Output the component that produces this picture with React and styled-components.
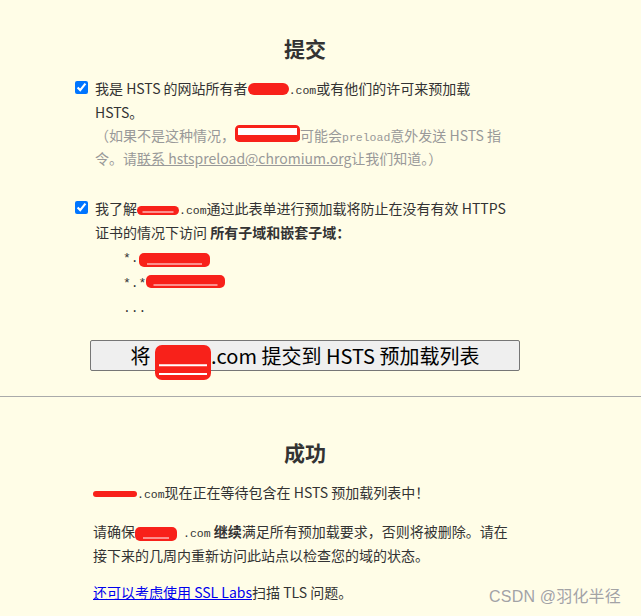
import React from 'react';
import styled, { createGlobalStyle } from 'styled-components';

const RED = '#f8211a';

const Global = createGlobalStyle`
  html, body { margin: 0; padding: 0; background: #fffde7; }
  body {
    font-family: "Noto Sans CJK SC", "Noto Sans", sans-serif;
    color: #333;
    font-size: 14px;
  }
`;

const Page = styled.div`
  position: relative;
  width: 641px;
  height: 616px;
  overflow: hidden;
  padding-top: 33px;
  box-sizing: border-box;
`;

const Section = styled.section`
  width: 460px;
  margin-left: 75px;
  margin-top: ${p => p.$top || 0}px;
`;

const Title = styled.h2`
  margin: 0;
  text-align: center;
  font-size: 21px;
  line-height: 30px;
  font-weight: 700;
  color: #333;
`;

const Form = styled.form`
  margin-top: 13px;
  display: flex;
  flex-direction: column;
`;

const CheckRow = styled.label`
  display: flex;
  gap: 7px;
  line-height: 24px;
  margin-top: ${p => p.$top || 0}px;
`;

const Check = styled.input`
  flex: none;
  width: 13px;
  height: 13px;
  margin: 5px 0 0 0;
`;

const LabelText = styled.div`
  width: 423px;
`;

const Note = styled.span`
  display: block;
  color: #999;
  line-height: 23px;
`;

const NoteLink = styled.a`
  color: #999;
  text-decoration: underline;
`;

const Code = styled.code`
  font-family: "Liberation Mono", monospace;
  font-size: 11.5px;
  line-height: 1;
`;

const Strong = styled.strong`
  font-weight: 700;
`;

const DomainList = styled.ul`
  list-style: none;
  margin: 0;
  padding: 0 0 0 48px;
  line-height: 25px;
`;

const Domain = styled.li`
  code {
    font-family: "Liberation Mono", monospace;
    font-size: 13px;
    line-height: 1;
  }
`;

const Submit = styled.button`
  display: block;
  margin: 21px auto 0;
  width: 430px;
  height: 31px;
  padding: 0;
  background: #efefef;
  border: 1px solid #767676;
  border-radius: 2px;
  font-family: "Noto Sans CJK SC", "Noto Sans", sans-serif;
  font-size: 20px;
  line-height: 29px;
  color: #000;
`;

const Divider = styled.hr`
  margin: 25px 0 0;
  border: none;
  border-top: 1px solid #aaa;
  height: 0;
`;

const Para = styled.p`
  margin: ${p => p.$top || 0}px 0 0 18px;
  width: 426px;
  line-height: 24px;
`;

const Link = styled.a`
  color: #0000ee;
  text-decoration: underline;
`;

/* zero-height inline holder so the scribble never changes the line box */
const ScribbleBox = styled.span`
  display: inline-block;
  width: ${p => p.$w}px;
  height: 0;
  vertical-align: baseline;
  margin-right: ${p => p.$mr || 0}px;
  line-height: 0;
  svg {
    display: block;
    overflow: visible;
    transform: translateY(${p => p.$top}px);
  }
`;

const Watermark = styled.div`
  position: absolute;
  left: 489px;
  top: 586px;
  font-family: "Liberation Sans", "Noto Sans CJK SC", sans-serif;
  font-size: 16px;
  line-height: 22px;
  color: #a3a3a3;
  text-shadow: 0 0 1px #fff;
  letter-spacing: 0.2px;
`;

function Scribble({ w, h, kind = 'fill', top, mr }) {
  let shapes;
  if (kind === 'fill') {
    shapes = <rect x="0" y="0" width={w} height={h} rx={h / 2} fill={RED} />;
  } else if (kind === 'line') {
    shapes = (
      <>
        <rect x="0" y="0" width={w} height={h} rx={Math.min(h / 2, 5)} fill={RED} />
        <line x1={h / 2 + 1} x2={w - h / 2 - 1} y1={h - 3} y2={h - 3} stroke="#fff" strokeWidth="1" />
      </>
    );
  } else if (kind === 'box') {
    shapes = (
      <>
        <rect x="1.5" y="1.5" width={w - 3} height={h - 3} rx="3" fill="none" stroke={RED} strokeWidth="3" />
        <rect x="3" y="3" width={w - 6} height={h - 9} fill="#fff" />
        <rect x="0" y={h - 7} width={w} height="6" rx="3" fill={RED} />
      </>
    );
  } else {
    shapes = (
      <>
        <rect x="0" y="0" width={w} height={h} rx="7" fill={RED} />
        <rect x="4" y={h * 0.55} width={w - 8} height="2" fill="#fff" />
        <rect x="4" y={h * 0.8} width={w - 8} height="2" fill="#fff" />
      </>
    );
  }
  return (
    <ScribbleBox $w={w} $top={top} $mr={mr}>
      <svg width={w} height={h} viewBox={`0 0 ${w} ${h}`}>{shapes}</svg>
    </ScribbleBox>
  );
}

export default function App() {
  return (
    <>
      <Global />
      <Page>
        <Section>
          <Title>提交</Title>
          <Form onSubmit={e => e.preventDefault()}>
            <CheckRow>
              <Check type="checkbox" defaultChecked />
              <LabelText>
                我是 HSTS 的网站所有者<Scribble w={41} h={12} top={-11} /><Code>.com</Code>或有他们的许可来预加载 HSTS。
                <Note>
                  （如果不是这种情况，<Scribble w={65} h={17} kind="box" top={-16} />可能会<Code>preload</Code>意外发送 HSTS 指令。请<NoteLink>联系 hstspreload@chromium.org</NoteLink>让我们知道。）
                </Note>
              </LabelText>
            </CheckRow>
            <CheckRow $top={26}>
              <Check type="checkbox" defaultChecked />
              <LabelText>
                我了解<Scribble w={42} h={9} kind="line" top={-8} /><Code>.com</Code>通过此表单进行预加载将防止在没有有效 HTTPS 证书的情况下访问 <Strong>所有子域和嵌套子域：</Strong>
              </LabelText>
            </CheckRow>
            <DomainList>
              <Domain><code>*.</code><Scribble w={71} h={14} kind="line" top={-9} /></Domain>
              <Domain><code>*.*</code><Scribble w={79} h={13} kind="line" top={-12} /></Domain>
              <Domain><code>...</code></Domain>
            </DomainList>
            <Submit type="submit">
              将 <Scribble w={56} h={35} kind="stack" top={-19} />.com 提交到 HSTS 预加载列表
            </Submit>
          </Form>
        </Section>
        <Divider />
        <Section $top={40}>
          <Title>成功</Title>
          <Para $top={13}>
            <Scribble w={44} h={6} top={-7} /><Code>.com</Code>现在正在等待包含在 HSTS 预加载列表中！
          </Para>
          <Para $top={15}>
            请确保<Scribble w={42} h={14} kind="line" top={-10} mr={6} /><Code>.com</Code> <Strong>继续</Strong>满足所有预加载要求，否则将被删除。请在接下来的几周内重新访问此站点以检查您的域的状态。
          </Para>
          <Para $top={13}>
            <Link href="#">还可以考虑使用 SSL Labs</Link>扫描 TLS 问题。
          </Para>
        </Section>
        <Watermark>CSDN @羽化半径</Watermark>
      </Page>
    </>
  );
}
